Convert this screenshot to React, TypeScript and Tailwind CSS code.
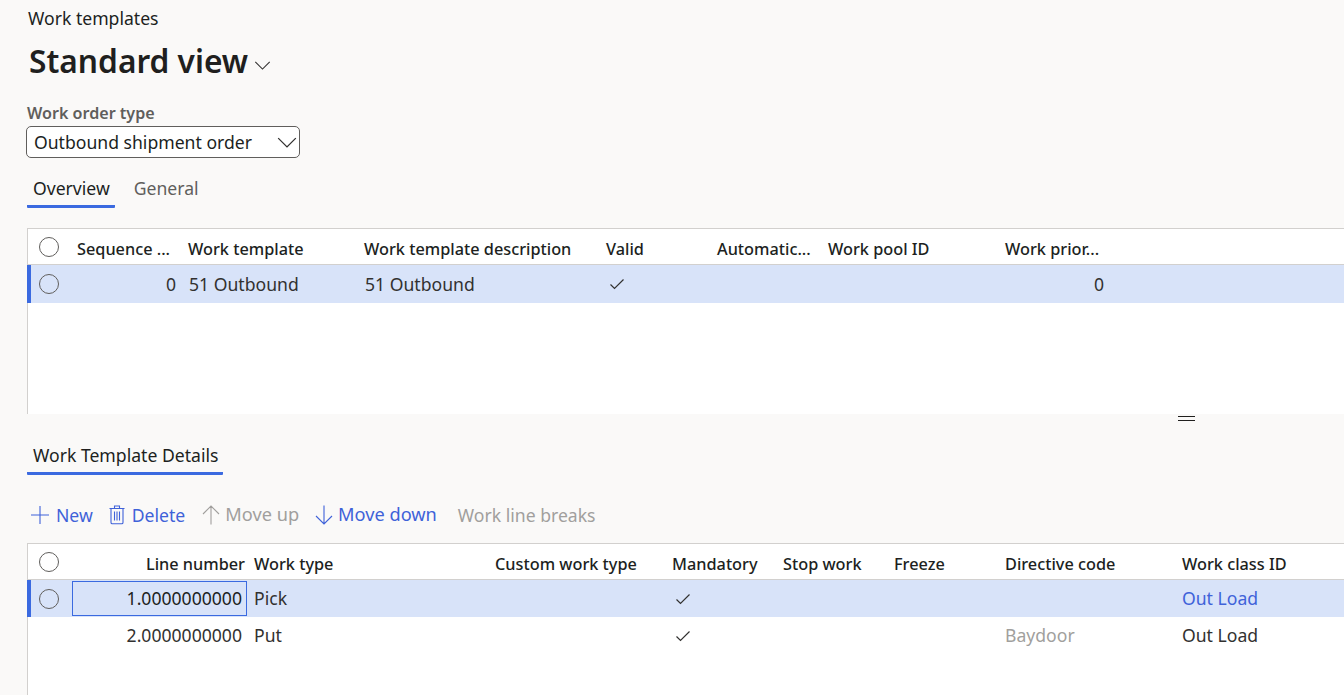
const FONT = "font-['Noto_Sans','Open_Sans',sans-serif]";

type Col = { w: string; label: string; right?: boolean };

function Circle() {
  return <span className="block w-[20px] h-[20px] rounded-full border border-[#605e5c]" />;
}

function Check() {
  return (
    <svg width="16" height="16" viewBox="0 0 16 16" fill="none" stroke="#323130" strokeWidth="1.2">
      <path d="M1.5 8.5 L5.5 12.5 L14.5 3.5" />
    </svg>
  );
}

function Chevron({ w, h }: { w: number; h: number }) {
  return (
    <svg width={w} height={h} viewBox="0 0 18 10" fill="none" stroke="#323130" strokeWidth="1.2">
      <path d="M1 1 L9 9 L17 1" />
    </svg>
  );
}

function HeaderRow({ cols }: { cols: Col[] }) {
  return (
    <div className="flex h-[36px] items-center border-b border-[#d2d0ce]">
      <div className="w-[44px] pl-[11px] shrink-0">
        <Circle />
      </div>
      {cols.map((c) => (
        <div
          key={c.label}
          className={`${c.w} shrink-0 pl-[5px] pt-[5px] text-[16.3px] font-medium text-[#201f1e] whitespace-nowrap ${c.right ? "text-right pr-[4px]" : "pr-[5px]"}`}
        >
          {c.label}
        </div>
      ))}
    </div>
  );
}

function Tab({ label, active }: { label: string; active?: boolean }) {
  return (
    <div className={`pl-[6px] pr-[5px] h-[37px] flex items-center border-b-[3px] ${active ? "border-[#3b6ae0] text-[#201f1e]" : "border-transparent text-[#605e5c]"} rounded-[1px] text-[17.6px]`}>
      {label}
    </div>
  );
}

function ToolButton({ icon, label, disabled, tight }: { icon: React.ReactNode; label: string; disabled?: boolean; tight?: boolean }) {
  return (
    <div className={`flex items-center ${tight ? "gap-[5px] text-[18.2px]" : "gap-[6px]"} ${disabled ? "text-[#a19f9d]" : "text-[#3f62d9]"}`}>
      {icon}
      <span>{label}</span>
    </div>
  );
}

const topCols: Col[] = [
  { w: "w-[111px]", label: "Sequence ..." },
  { w: "w-[176px]", label: "Work template" },
  { w: "w-[242px]", label: "Work template description" },
  { w: "w-[111px]", label: "Valid" },
  { w: "w-[111px]", label: "Automatic..." },
  { w: "w-[177px]", label: "Work pool ID" },
  { w: "w-[111px]", label: "Work prior..." },
];

const bottomCols: Col[] = [
  { w: "w-[177px]", label: "Line number", right: true },
  { w: "w-[241px]", label: "Work type" },
  { w: "w-[177px]", label: "Custom work type" },
  { w: "w-[111px]", label: "Mandatory" },
  { w: "w-[111px]", label: "Stop work" },
  { w: "w-[111px]", label: "Freeze" },
  { w: "w-[177px]", label: "Directive code" },
  { w: "w-[120px]", label: "Work class ID" },
];

export default function App() {
  return (
    <div className={`${FONT} h-[695px] w-[1344px] overflow-hidden bg-[#faf9f8] text-[#323130] text-[17.6px]`}>
      <div className="pl-[28px] pt-[6px] text-[17.6px] leading-[24px] text-[#201f1e]">Work templates</div>
      <div className="pl-[29px] mt-[7px] flex items-center h-[48px]">
        <span className="text-[31.7px] font-semibold text-[#201f1e] leading-[48px]">Standard view</span>
        <span className="ml-[6px] mt-[8px]">
          <Chevron w={17} h={9} />
        </span>
      </div>

      <div className="pl-[27px] mt-[17px]">
        <div className="text-[16.1px] font-semibold text-[#605e5c] leading-[22px]">Work order type</div>
        <div className="mt-[2px] -ml-px w-[274px] h-[32px] rounded-[5px] border border-[#605e5c] bg-white flex items-center justify-between pl-[7px] pr-[2px] text-[#201f1e]">
          <span>Outbound shipment order</span>
          <Chevron w={20} h={11} />
        </div>
      </div>

      <div className="pl-[27px] mt-[13px] flex gap-[13px]">
        <Tab label="Overview" active />
        <Tab label="General" />
      </div>

      <div className="ml-[27px] mt-[20px] h-[186px] bg-white border-t border-l border-[#d2d0ce]">
        <HeaderRow cols={topCols} />
        <div className="flex h-[38px] items-center bg-[#d8e3f9] border-l-[4px] border-[#3b6ae0] -ml-px">
          <div className="w-[41px] pl-[8px] shrink-0">
            <Circle />
          </div>
          <div className="w-[111px] shrink-0 pr-[7px] text-right">0</div>
          <div className="w-[176px] shrink-0 px-[6px]">51 Outbound</div>
          <div className="w-[242px] shrink-0 px-[6px]">51 Outbound</div>
          <div className="w-[111px] shrink-0 px-[8px]"><Check /></div>
          <div className="w-[111px] shrink-0" />
          <div className="w-[177px] shrink-0" />
          <div className="w-[111px] shrink-0 pr-[7px] text-right">0</div>
        </div>
      </div>

      <div className="h-[10px] flex justify-end pr-[149px] pt-[2px]">
        <span className="w-[17px] h-[5px] border-y border-[#201f1e]" />
      </div>

      <div className="pl-[27px] mt-[14px] flex">
        <Tab label="Work Template Details" active />
      </div>

      <div className="pl-[30px] mt-[28px] h-[24px] flex items-center text-[#3f62d9]">
        <ToolButton
          label="New"
          icon={
            <svg width="20" height="20" viewBox="0 0 20 20" fill="none" stroke="currentColor" strokeWidth="1.1">
              <path d="M10 1 V19 M1 10 H19" />
            </svg>
          }
        />
        <div className="ml-[15px]">
          <ToolButton
            label="Delete"
            icon={
              <svg width="18" height="20" viewBox="0 0 18 20" fill="none" stroke="currentColor" strokeWidth="1.1">
                <path d="M1.5 3.5 H16.5 M6.5 3.5 V1 H11.5 V3.5 M3 3.5 V17.5 Q3 18.8 4.3 18.8 H13.7 Q15 18.8 15 17.5 V3.5 M6.5 6.5 V15.5 M9 6.5 V15.5 M11.5 6.5 V15.5" />
              </svg>
            }
          />
        </div>
        <div className="ml-[17px]">
          <ToolButton
            label="Move up"
            disabled
            tight
            icon={
              <svg width="18" height="20" viewBox="0 0 18 20" fill="none" stroke="currentColor" strokeWidth="1.1">
                <path d="M9 19.5 V1 M1 9 L9 1 L17 9" />
              </svg>
            }
          />
        </div>
        <div className="ml-[16px]">
          <ToolButton
            label="Move down"
            tight
            icon={
              <svg width="18" height="20" viewBox="0 0 18 20" fill="none" stroke="currentColor" strokeWidth="1.1">
                <path d="M9 0.5 V19 M1 11 L9 19 L17 11" />
              </svg>
            }
          />
        </div>
        <span className="ml-[21px] text-[#a19f9d]">Work line breaks</span>
      </div>

      <div className="ml-[27px] mt-[16px] h-[160px] bg-white border-t border-l border-[#d2d0ce]">
        <HeaderRow cols={bottomCols} />
        <div className="flex h-[37px] items-center bg-[#d8e3f9] border-l-[4px] border-[#3b6ae0] -ml-px">
          <div className="w-[41px] pl-[8px] shrink-0">
            <Circle />
          </div>
          <div className="w-[175px] h-[35px] shrink-0 pr-[4px] flex items-center justify-end border border-[#3b6ae0] text-[#201f1e]">1.0000000000</div>
          <div className="w-[245px] shrink-0 px-[7px]">Pick</div>
          <div className="w-[176px] shrink-0" />
          <div className="w-[111px] shrink-0 px-[7px]"><Check /></div>
          <div className="w-[111px] shrink-0" />
          <div className="w-[111px] shrink-0" />
          <div className="w-[177px] shrink-0" />
          <div className="w-[120px] shrink-0 px-[4px] text-[#3f62d9]">Out Load</div>
        </div>
        <div className="flex h-[37px] items-center">
          <div className="w-[45px] shrink-0" />
          <div className="w-[174px] shrink-0 pr-[5px] text-right">2.0000000000</div>
          <div className="w-[244px] shrink-0 px-[7px]">Put</div>
          <div className="w-[176px] shrink-0" />
          <div className="w-[111px] shrink-0 px-[8px]"><Check /></div>
          <div className="w-[111px] shrink-0" />
          <div className="w-[111px] shrink-0" />
          <div className="w-[177px] shrink-0 px-[5px] text-[#a19f9d]">Baydoor</div>
          <div className="w-[120px] shrink-0 px-[5px]">Out Load</div>
        </div>
      </div>
    </div>
  );
}
